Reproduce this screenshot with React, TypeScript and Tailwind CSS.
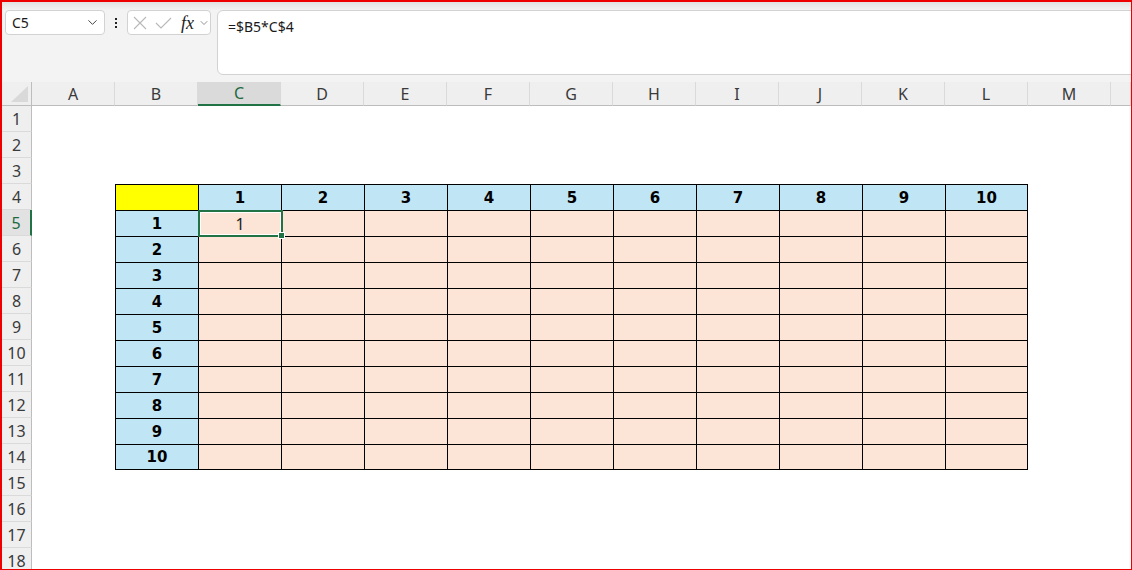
import React from "react";
import { ChevronDown } from "lucide-react";

const columns = ["A", "B", "C", "D", "E", "F", "G", "H", "I", "J", "K", "L", "M", ""];
const rows = Array.from({ length: 18 }, (_, i) => i + 1);

const headerFont = { fontFamily: '"Noto Sans", "Open Sans", sans-serif' };
const boldFont = { fontFamily: '"DejaVu Sans", Verdana, sans-serif' };

// table spans B..L (col index 1..11), rows 4..14
function isTable(row: number, col: number) {
  return row >= 4 && row <= 14 && col >= 1 && col <= 11;
}

function Cell({ row, col }: { row: number; col: number }) {
  if (!isTable(row, col)) return <div className="h-[26px]" />;

  const last = col === 11 ? "border-r" : "";
  const bottom = row === 14 ? "border-b" : "";
  const selected = row === 5 && col === 2;
  let bg = "bg-[#fce4d6]";
  let content: React.ReactNode = null;

  if (row === 4 && col === 1) bg = "bg-[#ffff00]";
  else if (row === 4) {
    bg = "bg-[#c0e6f5]";
    content = <span className="pt-px text-[15px] font-bold" style={boldFont}>{col - 1}</span>;
  } else if (col === 1) {
    bg = "bg-[#c0e6f5]";
    content = <span className="pt-px text-[15px] font-bold" style={boldFont}>{row - 4}</span>;
  } else if (selected) {
    content = <span className="text-[16px] text-[#222]" style={headerFont}>1</span>;
  }

  return (
    <div
      className={`relative flex h-[26px] items-center justify-center border-l border-t border-black text-black ${last} ${bottom} ${bg} ${
        selected ? "z-10" : ""
      }`}
    >
      {content}
      {selected && (
        <div className="absolute -left-px -top-px -right-[2px] -bottom-px border-2 border-[#217346]">
          <div className="h-full w-full border border-white" />
          <div className="absolute -right-[4px] -bottom-[4px] h-[7px] w-[7px] border border-white bg-[#217346]" />
        </div>
      )}
    </div>
  );
}

export default function App() {
  return (
    <div className="flex h-[570px] w-[1132px] flex-col overflow-hidden border-l-2 border-t-2 border-r border-b border-[#ee0000] bg-white">
      {/* ribbon / formula bar */}
      <div className="flex h-[80px] shrink-0 items-start bg-[#f3f3f3] bg-linear-to-b from-[#e2e2e2] via-[#f3f3f3] via-10% to-[#f3f3f3] pl-[3px] pt-[8px]">
        <div className="flex h-[25px] w-[100px] items-center justify-between rounded-[4px] border border-[#d2d2d2] bg-white pl-[6px] pr-[4px]">
          <span className="text-[14px] text-[#1a1a1a]" style={headerFont}>C5</span>
          <ChevronDown size={15} strokeWidth={1.6} className="text-[#444]" />
        </div>
        <div className="flex h-[25px] w-[22px] flex-col items-center justify-center gap-[2px]">
          <span className="h-[2px] w-[2px] bg-[#222]" />
          <span className="h-[2px] w-[2px] bg-[#222]" />
          <span className="h-[2px] w-[2px] bg-[#222]" />
        </div>
        <div className="flex h-[25px] w-[84px] items-center rounded-[4px] border border-[#d2d2d2] bg-white pl-[4px]">
          <svg width="14" height="14" viewBox="0 0 14 14" className="ml-px">
            <path d="M1 1 L13 13 M13 1 L1 13" stroke="#b8b8b8" strokeWidth="1.1" fill="none" />
          </svg>
          <svg width="17" height="12" viewBox="0 0 17 12" className="ml-[8px]">
            <path d="M1 6 L6 11 L16 1" stroke="#b8b8b8" strokeWidth="1.1" fill="none" />
          </svg>
          <span
            className="ml-[9px] text-[18px] italic leading-none text-[#222]"
            style={{ fontFamily: '"Liberation Serif", "Times New Roman", serif' }}
          >
            fx
          </span>
          <ChevronDown size={12} strokeWidth={1.4} className="ml-[4px] text-[#666]" />
        </div>
        <div className="ml-[6px] -mr-[6px] h-[65px] flex-1 rounded-[6px] border border-[#d2d2d2] bg-white pl-[10px] pt-[3px]">
          <span className="text-[14px] text-[#1a1a1a]" style={headerFont}>=$B5*C$4</span>
        </div>
      </div>

      {/* sheet grid */}
      <div className="grid flex-1 grid-cols-[30px_repeat(13,83px)_1fr] auto-rows-[26px] grid-rows-[24px]">
        {/* corner */}
        <div className="relative flex items-end justify-end border-b border-r border-[#bdbdbd] bg-[#efefef] pb-[3px] pr-[3px]">
          <svg width="17" height="16" viewBox="0 0 17 16">
            <polygon points="17,0 17,16 0,16" fill="#d9d9d9" />
          </svg>
        </div>
        {columns.map((c, i) => (
          <div
            key={`h-${i}`}
            className={`flex items-center justify-center border-r text-[16px] ${
              c === "C"
                ? "border-b-2 border-r-[#d9d9d9] border-b-[#217346] bg-[#dadada] text-[#1e6b41]"
                : "border-b border-r-[#dadada] border-b-[#bdbdbd] bg-[#efefef] text-[#3a3a3a]"
            }`}
            style={headerFont}
          >
            {c}
          </div>
        ))}

        {rows.map((r) => (
          <React.Fragment key={r}>
            <div
              className={`flex items-center justify-center border-b border-b-[#dadada] text-[16px] ${
                r === 5
                  ? "border-r-2 border-r-[#217346] bg-[#e2e2e2] text-[#1e6b41]"
                  : "border-r border-r-[#bdbdbd] bg-[#efefef] text-[#3a3a3a]"
              }`}
              style={headerFont}
            >
              {r}
            </div>
            {columns.map((_, ci) => (
              <Cell key={`${r}-${ci}`} row={r} col={ci} />
            ))}
          </React.Fragment>
        ))}
      </div>
    </div>
  );
}
